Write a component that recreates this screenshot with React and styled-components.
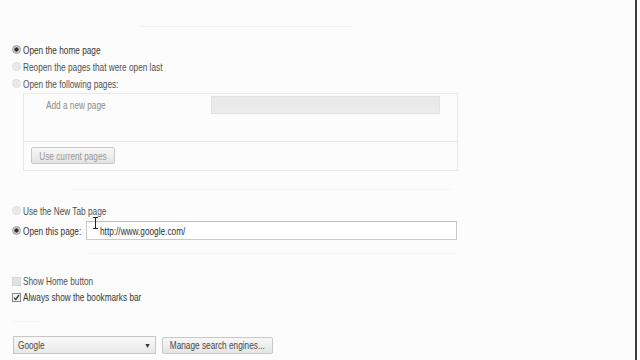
import React from "react";
import styled, { createGlobalStyle } from "styled-components";

const GlobalStyle = createGlobalStyle`
  html, body {
    margin: 0;
    padding: 0;
    background: #fbfcfb;
  }
  body {
    font-family: "Liberation Sans", Arial, sans-serif;
    font-size: 11px;
    color: #3a3a3a;
  }
`;

const Page = styled.div`
  display: flex;
  width: 640px;
  height: 360px;
  overflow: hidden;
  background: #fbfcfb;
`;

const Main = styled.div`
  width: 623px;
  padding-left: 12px;
  display: flex;
  flex-direction: column;
  position: relative;
`;

const Edge = styled.div`
  width: 2px;
  background: #3c3c3c;
`;

const Rule = styled.div`
  height: 1px;
  background: ${({ $color }) => $color || "#f0f0f0"};
  margin-left: ${({ $left }) => $left || 0}px;
  width: ${({ $width }) => $width}px;
  margin-top: ${({ $top }) => $top || 0}px;
`;

const Row = styled.div`
  display: flex;
  align-items: center;
  gap: ${({ $gap }) => $gap || 3}px;
  height: ${({ $h }) => $h || 17}px;
  margin-top: ${({ $top }) => $top || 0}px;
  padding-left: ${({ $pad }) => $pad || 0}px;
  width: ${({ $w }) => ($w ? `${$w}px` : "auto")};
`;

const Label = styled.span`
  display: inline-flex;
  align-items: center;
  gap: 2px;
  white-space: nowrap;
  flex: ${({ $fill }) => ($fill ? "1 1 0" : "none")};
  min-width: 0;
  color: ${({ $muted }) => ($muted ? "#505050" : "#363636")};
`;

/* the capture is squashed horizontally, so the text is too */
const Squeeze = styled.span`
  display: inline-block;
  white-space: nowrap;
  transform: scaleX(0.75);
  transform-origin: ${({ $center }) => ($center ? "center" : "left center")};
`;

const Radio = styled.span`
  width: 7px;
  height: 7px;
  border-radius: 50%;
  border: 1px solid ${({ $on }) => ($on ? "#9a9a9a" : "#d8d8d8")};
  background: ${({ $on }) =>
    $on
      ? "radial-gradient(circle, #2f2f2f 0 1.8px, #c8c8c8 2.4px, #eeeeee 100%)"
      : "radial-gradient(circle, #e4e4e4 0, #f2f2f2 100%)"};
  flex: none;
`;

const Check = styled.span`
  width: 7px;
  height: 7px;
  border: 1px solid ${({ $on }) => ($on ? "#8a8a8a" : "#d6d6d6")};
  background: ${({ $on }) => ($on ? "#f4f4f4" : "#e2e2e2")};
  display: inline-flex;
  align-items: center;
  justify-content: center;
  flex: none;
`;

const PagesBox = styled.div`
  margin-left: 11px;
  margin-top: 1px;
  width: 433px;
  height: 76px;
  border: 1px solid #e8e8e8;
  border-top-color: #ececec;
  display: flex;
  flex-direction: column;
`;

const BoxTop = styled.div`
  height: 48px;
  border-bottom: 1px solid #e6e6e6;
  display: flex;
  align-items: flex-start;
  padding-top: 2px;
  box-sizing: border-box;
`;

const AddLabel = styled.span`
  color: #8a8a8a;
  width: 165px;
  padding-left: 22px;
  height: 18px;
  line-height: 18px;
  white-space: nowrap;
`;

const GhostInput = styled.div`
  width: 229px;
  height: 18px;
  background: linear-gradient(#e8e8e8, #ececec);
  border: 1px solid #e2e2e2;
  box-sizing: border-box;
`;

const BoxBottom = styled.div`
  padding: 5px 0 0 7px;
`;

const Button = styled.div`
  height: 17px;
  width: ${({ $w }) => $w}px;
  box-sizing: border-box;
  border: 1px solid #c8c8c8;
  border-radius: 2px;
  background: linear-gradient(#f7f7f7, #e4e4e4);
  color: ${({ $dim }) => ($dim ? "#9a9a9a" : "#4a4a4a")};
  display: flex;
  align-items: center;
  justify-content: center;
  white-space: nowrap;
  overflow: hidden;
  flex: none;
`;

const TextInput = styled.div`
  width: 371px;
  height: 19px;
  flex: none;
  box-sizing: border-box;
  border: 1px solid #c9c9c9;
  border-top-color: #bdbdbd;
  background: #ffffff;
  display: flex;
  align-items: center;
  padding-left: 13px;
  color: #2e2e2e;
`;

const Select = styled.div`
  width: 143px;
  height: 18px;
  flex: none;
  box-sizing: border-box;
  border: 1px solid #c6c6c6;
  background: linear-gradient(#fafafa, #e8e8e8);
  display: flex;
  align-items: center;
  justify-content: space-between;
  padding: 0 4px;
  color: #4a4a4a;
`;

const Caret = styled.span`
  font-size: 7px;
  color: #333;
`;

const Cursor = styled.svg`
  position: absolute;
  left: 92px;
  top: 217px;
`;

function Tick() {
  return (
    <svg width="7" height="7" viewBox="0 0 7 7">
      <path d="M1 3.6 L2.8 5.4 L6 1" fill="none" stroke="#333" strokeWidth="1.3" />
    </svg>
  );
}

export default function App() {
  return (
    <>
      <GlobalStyle />
      <Page>
        <Main>
          <Rule $top={26} $left={128} $width={212} />
          <Row $top={14}>
            <Label>
              <Radio $on />
              <Squeeze>Open the home page</Squeeze>
            </Label>
          </Row>
          <Row>
            <Label $muted>
              <Radio />
              <Squeeze>Reopen the pages that were open last</Squeeze>
            </Label>
          </Row>
          <Row>
            <Label $muted>
              <Radio />
              <Squeeze>Open the following pages:</Squeeze>
            </Label>
          </Row>
          <PagesBox>
            <BoxTop>
              <AddLabel>
                <Squeeze>Add a new page</Squeeze>
              </AddLabel>
              <GhostInput />
            </BoxTop>
            <BoxBottom>
              <Button $w={84} $dim>
                <Squeeze $center>Use current pages</Squeeze>
              </Button>
            </BoxBottom>
          </PagesBox>
          <Rule $top={18} $left={60} $width={380} $color="#f5f5f5" />
          <Row $top={12}>
            <Label $muted>
              <Radio />
              <Squeeze>Use the New Tab page</Squeeze>
            </Label>
          </Row>
          <Row $h={21} $top={1} $w={445}>
            <Label $fill>
              <Radio $on />
              <Squeeze>Open this page:</Squeeze>
            </Label>
            <TextInput>
              <Squeeze>http://www.google.com/</Squeeze>
            </TextInput>
          </Row>
          <Rule $top={12} $left={75} $width={370} $color="#f5f5f5" />
          <Row $top={19} $h={16}>
            <Label $muted>
              <Check />
              <Squeeze>Show Home button</Squeeze>
            </Label>
          </Row>
          <Row $h={16}>
            <Label>
              <Check $on>
                <Tick />
              </Check>
              <Squeeze>Always show the bookmarks bar</Squeeze>
            </Label>
          </Row>
          <Rule $top={16} $left={0} $width={30} $color="#f5f5f5" />
          <Row $h={18} $top={14} $gap={6} $pad={1}>
            <Select>
              <Squeeze>Google</Squeeze>
              <Caret>▼</Caret>
            </Select>
            <Button $w={111}>
              <Squeeze $center>Manage search engines...</Squeeze>
            </Button>
          </Row>
          <Cursor width="7" height="12" viewBox="0 0 7 12">
            <path d="M1 0.5 H6 M3.5 0.5 V11.5 M1 11.5 H6" stroke="#222" strokeWidth="1" fill="none" />
          </Cursor>
        </Main>
        <Edge />
      </Page>
    </>
  );
}
